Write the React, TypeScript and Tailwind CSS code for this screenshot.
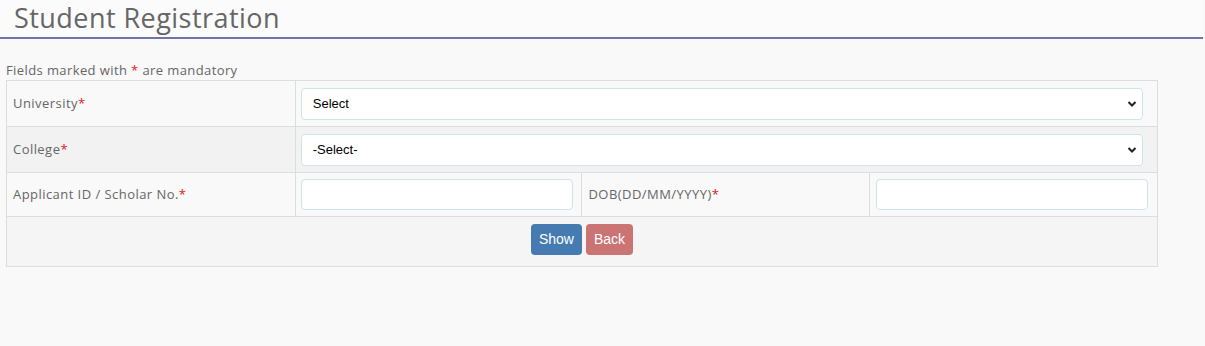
import React from 'react';

const font = { fontFamily: '"Open Sans", "Noto Sans", sans-serif' };

function Req() {
  return <span className="text-[#e02020]">*</span>;
}

const inputCls =
  'w-full h-[31px] rounded-[4px] border border-[#cfe4ea] bg-white px-[11px] text-[13px] tracking-normal text-black outline-none font-["Liberation_Sans",Arial,sans-serif]';

function Chevron() {
  return (
    <svg width="10" height="8" viewBox="0 0 10 8" className="pointer-events-none absolute right-[6px] top-[12px]">
      <path d="M1.5 2L5 5.5L8.5 2" stroke="#222" strokeWidth="2" fill="none" />
    </svg>
  );
}

function SelectBox({ value }: { value: string }) {
  return (
    <div className="relative">
      <select className={`${inputCls} h-[32px] appearance-none`} defaultValue={value}>
        <option>{value}</option>
      </select>
      <Chevron />
    </div>
  );
}

export default function App() {
  return (
    <div className="min-h-[346px] bg-[#f9f9f9] text-[#666]" style={font}>
      {/* header */}
      <div className="h-[39px] bg-[#fbfbfb] border-b-2 border-[#7074a8] pl-[14px] mr-[2px]">
        <h1 className="text-[27px] leading-[36px] tracking-[0.45px] text-[#666] font-normal">Student Registration</h1>
      </div>

      <div className="pl-[6px] pt-[22px] w-[1157px]">
        <p className="text-[13px] leading-[18px] tracking-[0.4px] mb-[1px]">
          Fields marked with <Req /> are mandatory
        </p>

        <table className="w-[1152px] border-collapse text-[13px] tracking-[0.45px]">
          <colgroup>
            <col className="w-[289px]" />
            <col className="w-[287px]" />
            <col className="w-[288px]" />
            <col className="w-[288px]" />
          </colgroup>
          <tbody>
            <tr className="h-[46px] bg-[#f9f9f9]">
              <td className="border border-[#dddddd] px-[6px]">
                University<Req />
              </td>
              <td colSpan={3} className="border border-[#dddddd] pl-[5px] pr-[14px]">
                <SelectBox value="Select" />
              </td>
            </tr>
            <tr className="h-[46px] bg-[#f2f2f2]">
              <td className="border border-[#dddddd] px-[6px]">
                College<Req />
              </td>
              <td colSpan={3} className="border border-[#dddddd] pl-[5px] pr-[14px]">
                <SelectBox value="-Select-" />
              </td>
            </tr>
            <tr className="h-[44px] bg-[#f9f9f9]">
              <td className="border border-[#dddddd] px-[6px]">
                Applicant ID / Scholar No.<Req />
              </td>
              <td className="border border-[#dddddd] pl-[5px] pr-[8px]">
                <input className={`${inputCls} h-[30px]`} />
              </td>
              <td className="border border-[#dddddd] px-[6px]">
                DOB(DD/MM/YYYY)<Req />
              </td>
              <td className="border border-[#dddddd] pl-[6px] pr-[9px]">
                <input className={`${inputCls} h-[30px]`} />
              </td>
            </tr>
            <tr className="h-[50px] bg-[#f5f5f5]">
              <td colSpan={4} className="border border-[#dddddd] text-center">
                <div className="flex justify-center gap-[4px] mb-[4px] tracking-normal">
                  <button className="h-[31px] px-[8px] rounded-[4px] bg-[#457bb0] text-white text-[14px] font-['Liberation_Sans',Arial,sans-serif]">
                    Show
                  </button>
                  <button className="h-[31px] px-[8px] rounded-[4px] bg-[#cb7474] text-white text-[14px] font-['Liberation_Sans',Arial,sans-serif]">
                    Back
                  </button>
                </div>
              </td>
            </tr>
          </tbody>
        </table>
      </div>
    </div>
  );
}
